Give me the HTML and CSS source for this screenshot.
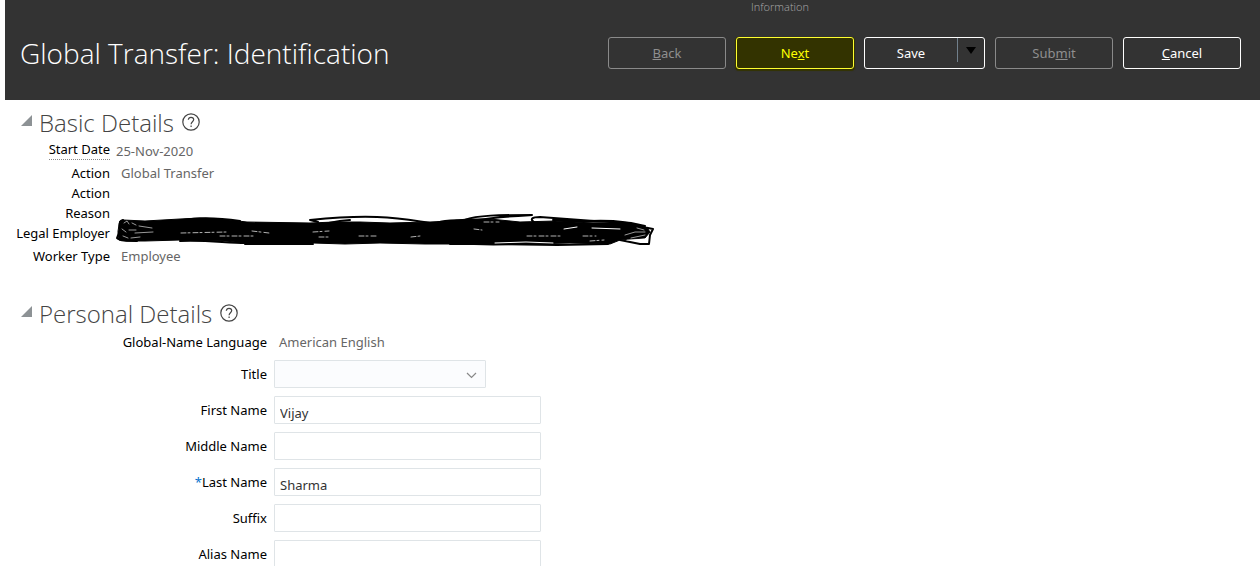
FILE: index.html
```html
<!DOCTYPE html>
<html lang="en">
<head>
    <meta charset="UTF-8">
    <meta name="viewport" content="width=device-width, initial-scale=1.0">
    <title>Global Transfer: Identification</title>
    <link rel="stylesheet" href="styles.css">
</head>
<body>

    <header class="page-header">
        <div class="train">Information</div>
        <div class="title-bar">
            <h1>Global Transfer: Identification</h1>
            <div class="actions">
                <button class="btn" type="button" disabled><span><u>B</u>ack</span></button>
                <button class="btn btn-next" type="button"><span>Ne<u>x</u>t</span></button>
                <div class="btn-split">
                    <button class="split-main" type="button">Save</button>
                    <button class="split-arrow" type="button" aria-label="Save options">
                        <svg width="10" height="7" viewBox="0 0 10 7"><path d="M0 0h10L5 7z" fill="#000"/></svg>
                    </button>
                </div>
                <button class="btn" type="button" disabled><span>Sub<u>m</u>it</span></button>
                <button class="btn" type="button"><span><u>C</u>ancel</span></button>
            </div>
        </div>
    </header>

    <main>
        <section class="basic">
            <div class="section-head">
                <button class="toggle" type="button" aria-label="Collapse Basic Details">
                    <svg width="11" height="11" viewBox="0 0 11 11"><path d="M11 0v11H0z" fill="#8d9295"/></svg>
                </button>
                <h2>Basic Details</h2>
                <button class="help" type="button" aria-label="Help">
                    <svg width="18" height="18" viewBox="0 0 18 18" fill="none" stroke="#444" stroke-width="1.2">
                        <circle cx="9" cy="9" r="8.2"/>
                        <path d="M6.3 6.7C6.5 5.1 7.5 4.3 9 4.3c1.6 0 2.7.9 2.7 2.3 0 2.1-2.6 2.2-2.6 4.6"/>
                        <path d="M9.1 12.5v1.6"/>
                    </svg>
                </button>
            </div>
            <dl class="details">
                <div class="detail start-date">
                    <dt><span class="hint">Start Date</span></dt>
                    <dd>25-Nov-2020</dd>
                </div>
                <div class="detail">
                    <dt>Action</dt>
                    <dd>Global Transfer</dd>
                </div>
                <div class="detail">
                    <dt>Action<br>Reason</dt>
                    <dd></dd>
                </div>
                <div class="detail employer">
                    <dt>Legal Employer</dt>
                    <dd>
                        <svg class="scribble" width="542" height="36" viewBox="0 0 542 36" fill="none" stroke="#000" stroke-linecap="round" stroke-linejoin="round">
                            <path fill="#000" stroke-width="1" d="M5 9 8 8 30 9 65 7 85 6 105 7 132 10 195 11 220 10 245 10 275 11 315 10 335 9 352 7 375 7 405 10 440 9 478 11 512 11 533 17 535 20 530 26 505 28 495 32 455 31 378 33 340 32 310 32 265 31 230 32 198 31 130 31 110 29 65 28 30 29 12 29 4 28 3 20z"/>
                            <path stroke-width="2" d="M8 8C4 9 4 13 5 18L2 26C5 29 12 29 22 29M65 29C95 28 110 31 131 31M130 32H198M68 8C85 5 105 6 125 9M195 8C215 6 238 4 262 5S295 8 315 11M195 8 203 10M200 13C212 12 218 9 235 8M322 11C334 6 347 10 355 7M350 8C362 3 384 3 417 3 399 4 379 5 363 8M420 11C414 7 417 5 425 5L479 9M475 9C500 8 506 10 516 11L530 14M438 8C465 11 497 8 513 12L538 17 535 23 534 32 525 32 505 28M335 32H376L442 33 493 32"/>
                            <path stroke="#fff" stroke-width=".6" d="M9 11 12 9 14 12M17 11 21 13M24 14 37 16M7 17 11 20M14 18 21 18M8 24 13 26M16 26 25 25M20 21 38 20M510 23 520 20 530 20M516 26 530 23M512 28 532 27M522 16 529 18M520 29 530 30"/>
                            <path stroke="#fff" stroke-width=".7" stroke-dasharray="5 2 2 3" d="M66 21 111 20M105 24 141 24M137 19 154 21M198 20 214 19M204 25 213 25M244 24 263 24M296 25 305 24M369 10 384 10M359 17 367 18M412 24 448 24M468 24 481 24M475 29 489 28"/>
                            <path stroke="#fff" stroke-width="1" d="M380 31 411 30 438 31M449 17 462 15M477 16 505 17"/>
                        </svg>
                    </dd>
                </div>
                <div class="detail">
                    <dt>Worker Type</dt>
                    <dd>Employee</dd>
                </div>
            </dl>
        </section>

        <section class="personal">
            <div class="section-head">
                <button class="toggle" type="button" aria-label="Collapse Personal Details">
                    <svg width="11" height="11" viewBox="0 0 11 11"><path d="M11 0v11H0z" fill="#8d9295"/></svg>
                </button>
                <h2>Personal Details</h2>
                <button class="help" type="button" aria-label="Help">
                    <svg width="18" height="18" viewBox="0 0 18 18" fill="none" stroke="#444" stroke-width="1.2">
                        <circle cx="9" cy="9" r="8.2"/>
                        <path d="M6.3 6.7C6.5 5.1 7.5 4.3 9 4.3c1.6 0 2.7.9 2.7 2.3 0 2.1-2.6 2.2-2.6 4.6"/>
                        <path d="M9.1 12.5v1.6"/>
                    </svg>
                </button>
            </div>
            <form class="fields">
                <div class="field">
                    <span class="label">Global-Name Language</span>
                    <span class="static">American English</span>
                </div>
                <div class="field">
                    <label for="title">Title</label>
                    <div class="select-wrap">
                        <select id="title"><option></option></select>
                        <svg class="chevron" width="11" height="7" viewBox="0 0 11 7"><path d="M1 1l4.5 4.5L10 1" fill="none" stroke="#888" stroke-width="1.2"/></svg>
                    </div>
                </div>
                <div class="field">
                    <label for="first">First Name</label>
                    <input id="first" type="text" value="Vijay">
                </div>
                <div class="field">
                    <label for="middle">Middle Name</label>
                    <input id="middle" type="text">
                </div>
                <div class="field">
                    <label for="last"><span class="required">*</span>Last Name</label>
                    <input id="last" type="text" value="Sharma">
                </div>
                <div class="field">
                    <label for="suffix">Suffix</label>
                    <input id="suffix" type="text">
                </div>
                <div class="field">
                    <label for="alias">Alias Name</label>
                    <input id="alias" type="text">
                </div>
            </form>
        </section>
    </main>

</body>
</html>
```
FILE: styles.css
```css
* {
    box-sizing: border-box;
}

body {
    margin: 0;
    height: 100vh;
    overflow: hidden;
    background: #fff;
    color: #000;
    font-family: "Noto Sans", "Open Sans", sans-serif;
    font-size: 13px;
    line-height: 20px;
}

button, input, select {
    font: inherit;
}

button {
    padding: 0;
    border: none;
    background: none;
    color: inherit;
}

.page-header {
    height: 100px;
    margin-left: 5px;
    padding: 0 19px 0 15px;
    background: #333;
    color: #fff;
}

.train {
    height: 37px;
    padding-right: 432px;
    text-align: right;
    color: #aaa;
    font-family: "Open Sans", sans-serif;
    font-size: 11px;
    font-weight: 300;
    line-height: 14px;
}

.title-bar {
    display: flex;
    justify-content: space-between;
    align-items: center;
    height: 32px;
}

h1, h2 {
    font-family: "Open Sans", sans-serif;
    font-weight: 300;
    white-space: nowrap;
}

h1 {
    margin: 0;
    font-size: 28px;
}

.actions {
    display: flex;
    gap: 10px;
}

.btn {
    width: 118px;
    height: 32px;
    border: 1px solid #fff;
    border-radius: 3px;
}

.btn:disabled {
    border-color: #8a8a8a;
    color: #8f8f8f;
}

.btn-next {
    border-color: #ffff30;
    background: #333300;
    color: #ffff00;
    box-shadow: 0 1px 1px 1px #333300;
}

.btn-split {
    display: flex;
    width: 121px;
    height: 32px;
    border: 1px solid #fff;
    border-radius: 3px;
}

.split-main {
    flex: 1;
}

.split-arrow {
    display: flex;
    justify-content: center;
    width: 27px;
    height: 24px;
    padding-top: 9px;
    border-left: 1px solid #71808c;
}

.section-head {
    display: flex;
    align-items: flex-start;
    height: 39px;
    padding: 11px 0 0 21px;
}

h2 {
    margin: 0 8px 0 7px;
    color: #444;
    font-size: 24px;
    line-height: 24px;
}

.toggle, .help {
    display: flex;
}

.toggle {
    padding-top: 4px;
}

.help {
    padding-top: 2px;
}

.details {
    margin: 0;
}

.detail {
    display: flex;
    gap: 11px;
}

.detail dt {
    width: 110px;
    text-align: right;
}

.detail dd {
    margin: 0;
    color: #666;
}

.start-date {
    gap: 6px;
    padding-bottom: 2px;
}

.start-date dd {
    padding-top: 2px;
}

.hint {
    display: block;
    width: max-content;
    margin-left: auto;
    border-bottom: 1px dotted #888;
    line-height: 20px;
}

.employer {
    position: relative;
    padding-bottom: 3px;
}

/* marker strokes run over the rows above and below */
.scribble {
    position: absolute;
    left: 115px;
    top: -11px;
}

.personal {
    margin-top: 25px;
}

.fields {
    display: flex;
    flex-direction: column;
    gap: 8px;
    margin-top: 2px;
}

.field {
    display: flex;
    align-items: center;
    gap: 7px;
}

.field label, .field .label {
    width: 267px;
    text-align: right;
}

.static {
    padding-left: 5px;
    color: #666;
}

.field input {
    width: 267px;
    height: 28px;
    padding: 5px 5px 0;
    border: 1px solid #dfe4e7;
    border-radius: 1px;
    background: #fff;
    color: #333;
}

.select-wrap {
    position: relative;
    width: 212px;
    height: 28px;
}

.select-wrap select {
    width: 100%;
    height: 100%;
    border: 1px solid #dfe4e7;
    border-radius: 1px;
    background: #fbfcfe;
    appearance: none;
}

.chevron {
    position: absolute;
    right: 9px;
    top: 12px;
}

.required {
    color: #0572ce;
}
```
